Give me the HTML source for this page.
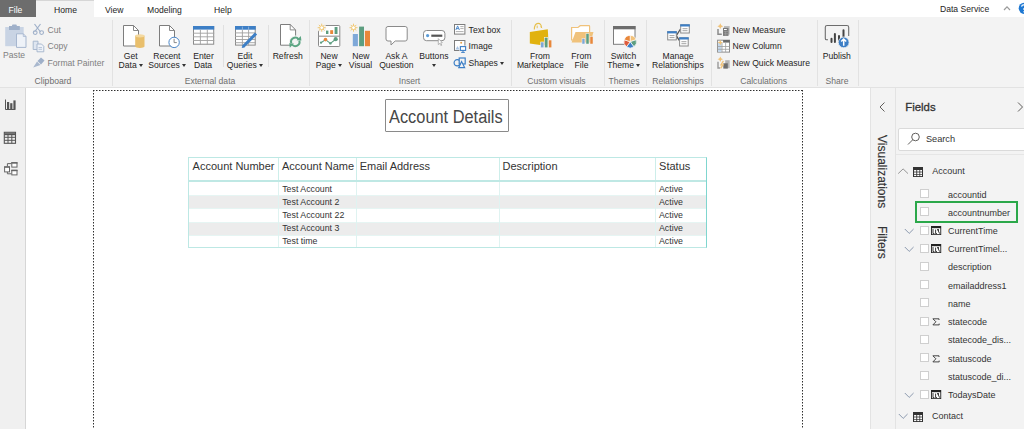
<!DOCTYPE html>
<html><head><meta charset="utf-8"><style>
html,body{margin:0;padding:0;width:1024px;height:429px;overflow:hidden;background:#fff;}
body{position:relative;font-family:"Liberation Sans",sans-serif;}
.t{position:absolute;white-space:nowrap;margin:0;padding:0;}
.dd{display:inline-block;width:0;height:0;border-left:2.5px solid transparent;border-right:2.5px solid transparent;border-top:3px solid #333;vertical-align:1px;margin-left:0px;}
</style></head><body>
<div class="t" style="left:0px;top:0px;width:1024px;height:17px;background:#ffffff;"></div>
<div class="t" style="left:0px;top:0px;width:36px;height:17px;background:#6d6d6d;"></div>
<div class="t" style="left:36px;top:0px;width:58px;height:17px;background:#f3f3f3;border-top:1px solid #d6d6d6;box-sizing:border-box"></div>
<div class="t" style="left:8.50px;top:5.62px;font-size:8.6px;line-height:8.6px;color:#ffffff;font-weight:normal;">File</div>
<div class="t" style="left:54.00px;top:5.62px;font-size:8.6px;line-height:8.6px;color:#252423;font-weight:normal;">Home</div>
<div class="t" style="left:105.00px;top:5.62px;font-size:8.6px;line-height:8.6px;color:#252423;font-weight:normal;">View</div>
<div class="t" style="left:147.00px;top:5.62px;font-size:8.6px;line-height:8.6px;color:#252423;font-weight:normal;">Modeling</div>
<div class="t" style="left:214.00px;top:5.62px;font-size:8.6px;line-height:8.6px;color:#252423;font-weight:normal;">Help</div>
<div class="t" style="left:940.00px;top:4.72px;font-size:8.6px;line-height:8.6px;color:#252423;font-weight:normal;">Data Service</div>
<svg class="t" style="left:1002px;top:4px" width="10" height="8" viewBox="0 0 10 8"><path d="M2 6 L5 2.9 L8 6" fill="none" stroke="#9a9a9a" stroke-width="1.2"/></svg>
<svg class="t" style="left:1016px;top:1px" width="8" height="15" viewBox="0 0 8 15"><circle cx="8.3" cy="7.3" r="5.6" fill="#1e78d2"/><path d="M5.6 5.6 Q5.8 3.8 7.6 3.8 Q9.6 3.8 9.5 5.6 Q9.4 6.8 8 7.6 V9" fill="none" stroke="#fff" stroke-width="1.2"/><circle cx="8" cy="10.8" r="0.7" fill="#fff"/></svg>
<div class="t" style="left:0px;top:17px;width:1024px;height:70px;background:#f3f3f3;"></div>
<div class="t" style="left:0px;top:87px;width:1024px;height:1px;background:#e2e2e2;"></div>
<div class="t" style="left:112px;top:20px;width:1px;height:66px;background:#e2e2e2;"></div>
<div class="t" style="left:309px;top:20px;width:1px;height:66px;background:#e2e2e2;"></div>
<div class="t" style="left:511px;top:20px;width:1px;height:66px;background:#e2e2e2;"></div>
<div class="t" style="left:604px;top:20px;width:1px;height:66px;background:#e2e2e2;"></div>
<div class="t" style="left:646px;top:20px;width:1px;height:66px;background:#e2e2e2;"></div>
<div class="t" style="left:711px;top:20px;width:1px;height:66px;background:#e2e2e2;"></div>
<div class="t" style="left:817px;top:20px;width:1px;height:66px;background:#e2e2e2;"></div>
<div class="t" style="left:858px;top:20px;width:1px;height:66px;background:#e2e2e2;"></div>
<div class="t" style="left:223px;top:25px;width:1px;height:42px;background:#e0e0e0;"></div>
<div class="t" style="left:268px;top:25px;width:1px;height:42px;background:#e0e0e0;"></div>
<div class="t" style="left:-5.90px;top:51.32px;width:40px;text-align:center;font-size:8.6px;line-height:8.6px;color:#808080;font-weight:normal;">Paste</div>
<div class="t" style="left:100.70px;top:51.72px;width:60px;text-align:center;font-size:8.6px;line-height:8.6px;color:#252423;font-weight:normal;">Get</div>
<div class="t" style="left:100.80px;top:61.42px;width:60px;text-align:center;font-size:8.6px;line-height:8.6px;color:#252423;font-weight:normal;">Data <span class="dd"></span></div>
<div class="t" style="left:136.90px;top:51.72px;width:60px;text-align:center;font-size:8.6px;line-height:8.6px;color:#252423;font-weight:normal;">Recent</div>
<div class="t" style="left:137.20px;top:61.42px;width:60px;text-align:center;font-size:8.6px;line-height:8.6px;color:#252423;font-weight:normal;">Sources <span class="dd"></span></div>
<div class="t" style="left:173.50px;top:51.72px;width:60px;text-align:center;font-size:8.6px;line-height:8.6px;color:#252423;font-weight:normal;">Enter</div>
<div class="t" style="left:173.00px;top:61.42px;width:60px;text-align:center;font-size:8.6px;line-height:8.6px;color:#252423;font-weight:normal;">Data</div>
<div class="t" style="left:214.90px;top:51.72px;width:60px;text-align:center;font-size:8.6px;line-height:8.6px;color:#252423;font-weight:normal;">Edit</div>
<div class="t" style="left:215.00px;top:61.42px;width:60px;text-align:center;font-size:8.6px;line-height:8.6px;color:#252423;font-weight:normal;">Queries <span class="dd"></span></div>
<div class="t" style="left:257.70px;top:51.72px;width:60px;text-align:center;font-size:8.6px;line-height:8.6px;color:#252423;font-weight:normal;">Refresh</div>
<div class="t" style="left:299.00px;top:51.72px;width:60px;text-align:center;font-size:8.6px;line-height:8.6px;color:#252423;font-weight:normal;">New</div>
<div class="t" style="left:299.00px;top:61.42px;width:60px;text-align:center;font-size:8.6px;line-height:8.6px;color:#252423;font-weight:normal;">Page <span class="dd"></span></div>
<div class="t" style="left:330.90px;top:51.72px;width:60px;text-align:center;font-size:8.6px;line-height:8.6px;color:#252423;font-weight:normal;">New</div>
<div class="t" style="left:330.50px;top:61.42px;width:60px;text-align:center;font-size:8.6px;line-height:8.6px;color:#252423;font-weight:normal;">Visual</div>
<div class="t" style="left:366.40px;top:51.72px;width:60px;text-align:center;font-size:8.6px;line-height:8.6px;color:#252423;font-weight:normal;">Ask A</div>
<div class="t" style="left:366.40px;top:61.42px;width:60px;text-align:center;font-size:8.6px;line-height:8.6px;color:#252423;font-weight:normal;">Question</div>
<div class="t" style="left:403.90px;top:51.72px;width:60px;text-align:center;font-size:8.6px;line-height:8.6px;color:#252423;font-weight:normal;">Buttons</div>
<div class="t" style="left:403.60px;top:61.42px;width:60px;text-align:center;font-size:8.6px;line-height:8.6px;color:#252423;font-weight:normal;"><span class="dd"></span></div>
<div class="t" style="left:505.00px;top:51.72px;width:70px;text-align:center;font-size:8.6px;line-height:8.6px;color:#252423;font-weight:normal;">From</div>
<div class="t" style="left:505.30px;top:61.42px;width:70px;text-align:center;font-size:8.6px;line-height:8.6px;color:#252423;font-weight:normal;">Marketplace</div>
<div class="t" style="left:551.40px;top:51.72px;width:60px;text-align:center;font-size:8.6px;line-height:8.6px;color:#252423;font-weight:normal;">From</div>
<div class="t" style="left:551.50px;top:61.42px;width:60px;text-align:center;font-size:8.6px;line-height:8.6px;color:#252423;font-weight:normal;">File</div>
<div class="t" style="left:593.50px;top:51.72px;width:60px;text-align:center;font-size:8.6px;line-height:8.6px;color:#252423;font-weight:normal;">Switch</div>
<div class="t" style="left:593.90px;top:61.42px;width:60px;text-align:center;font-size:8.6px;line-height:8.6px;color:#252423;font-weight:normal;">Theme <span class="dd"></span></div>
<div class="t" style="left:643.10px;top:51.72px;width:70px;text-align:center;font-size:8.6px;line-height:8.6px;color:#252423;font-weight:normal;">Manage</div>
<div class="t" style="left:642.90px;top:61.42px;width:70px;text-align:center;font-size:8.6px;line-height:8.6px;color:#252423;font-weight:normal;">Relationships</div>
<div class="t" style="left:806.80px;top:52.32px;width:60px;text-align:center;font-size:8.6px;line-height:8.6px;color:#252423;font-weight:normal;">Publish</div>
<div class="t" style="left:47.50px;top:25.72px;font-size:8.6px;line-height:8.6px;color:#808080;font-weight:normal;">Cut</div>
<div class="t" style="left:47.50px;top:42.22px;font-size:8.6px;line-height:8.6px;color:#808080;font-weight:normal;">Copy</div>
<div class="t" style="left:47.50px;top:58.72px;font-size:8.6px;line-height:8.6px;color:#808080;font-weight:normal;">Format Painter</div>
<div class="t" style="left:468.60px;top:25.72px;font-size:8.6px;line-height:8.6px;color:#252423;font-weight:normal;">Text box</div>
<div class="t" style="left:468.60px;top:42.12px;font-size:8.6px;line-height:8.6px;color:#252423;font-weight:normal;">Image</div>
<div class="t" style="left:468.60px;top:59.32px;font-size:8.6px;line-height:8.6px;color:#252423;font-weight:normal;">Shapes <span class="dd"></span></div>
<div class="t" style="left:732.60px;top:25.72px;font-size:8.6px;line-height:8.6px;color:#252423;font-weight:normal;">New Measure</div>
<div class="t" style="left:732.60px;top:42.12px;font-size:8.6px;line-height:8.6px;color:#252423;font-weight:normal;">New Column</div>
<div class="t" style="left:732.60px;top:59.32px;font-size:8.6px;line-height:8.6px;color:#252423;font-weight:normal;">New Quick Measure</div>
<div class="t" style="left:8.00px;top:77.22px;width:90px;text-align:center;font-size:8.6px;line-height:8.6px;color:#6e6e6e;font-weight:normal;">Clipboard</div>
<div class="t" style="left:165.00px;top:77.22px;width:90px;text-align:center;font-size:8.6px;line-height:8.6px;color:#6e6e6e;font-weight:normal;">External data</div>
<div class="t" style="left:364.50px;top:77.22px;width:90px;text-align:center;font-size:8.6px;line-height:8.6px;color:#6e6e6e;font-weight:normal;">Insert</div>
<div class="t" style="left:511.50px;top:77.22px;width:90px;text-align:center;font-size:8.6px;line-height:8.6px;color:#6e6e6e;font-weight:normal;">Custom visuals</div>
<div class="t" style="left:579.00px;top:77.22px;width:90px;text-align:center;font-size:8.6px;line-height:8.6px;color:#6e6e6e;font-weight:normal;">Themes</div>
<div class="t" style="left:633.00px;top:77.22px;width:90px;text-align:center;font-size:8.6px;line-height:8.6px;color:#6e6e6e;font-weight:normal;">Relationships</div>
<div class="t" style="left:718.60px;top:77.22px;width:90px;text-align:center;font-size:8.6px;line-height:8.6px;color:#6e6e6e;font-weight:normal;">Calculations</div>
<div class="t" style="left:792.00px;top:77.22px;width:90px;text-align:center;font-size:8.6px;line-height:8.6px;color:#6e6e6e;font-weight:normal;">Share</div>
<svg class="t" style="left:0px;top:20px" width="30" height="30" viewBox="0 0 30 30"><rect x="5.2" y="7" width="18.5" height="19.2" fill="#c9d4e4"/><rect x="9" y="6" width="10.8" height="4" fill="#9fb0c9"/><rect x="12" y="4.5" width="4.8" height="2.5" rx="1" fill="#9fb0c9"/><path d="M16.5 13.8 H23.3 L26 16.5 V27.4 H16.5 Z" fill="#eef2f8" stroke="#a7b7cf" stroke-width="1"/><path d="M23.3 13.8 V16.5 H26" fill="none" stroke="#a7b7cf" stroke-width="0.8"/></svg>
<svg class="t" style="left:32px;top:23px" width="13" height="13" viewBox="0 0 13 13"><path d="M2.5 1 L8.5 9 M8.5 1 L2.5 9" stroke="#9fb0c9" stroke-width="1.2" fill="none"/><circle cx="3.2" cy="9.6" r="1.9" fill="none" stroke="#9fb0c9" stroke-width="1.1"/><circle cx="9.6" cy="9.6" r="1.9" fill="none" stroke="#9fb0c9" stroke-width="1.1"/></svg>
<svg class="t" style="left:32px;top:40px" width="13" height="13" viewBox="0 0 13 13"><path d="M1.2 1.2 H6 V9.5 H1.2 Z" fill="#dfe6f0" stroke="#a3b3cb" stroke-width="0.9"/><path d="M5 4 H9.5 L11.8 6.3 V11.8 H5 Z" fill="#eef2f8" stroke="#a3b3cb" stroke-width="0.9"/><path d="M6.5 7.5 H10 M6.5 9.3 H10" stroke="#a3b3cb" stroke-width="0.7"/></svg>
<svg class="t" style="left:32px;top:56px" width="14" height="13" viewBox="0 0 14 13"><path d="M1.2 11.5 L5 5.5 L8.5 9 Z" fill="#a9b8ce"/><path d="M5.5 5 L9 1.5 L12.5 4.5 L9 8.5 Z" fill="#9fb0c9"/></svg>
<svg class="t" style="left:122.6px;top:24.6px" width="24" height="24" viewBox="0 0 24 24"><path d="M0.5 0.5 H10.5 L15.5 5.5 V21 H0.5 Z" fill="#ffffff" stroke="#7d7d7d" stroke-width="1"/><path d="M10.5 0.5 V5.5 H15.5" fill="none" stroke="#7d7d7d" stroke-width="0.9"/><path d="M12.2 10.8 V21.6 A4.7 1.6 0 0 0 21.5 21.6 V10.8 Z" fill="#e9bf6c"/><ellipse cx="16.85" cy="10.8" rx="4.7" ry="1.6" fill="#f4d9a0"/></svg>
<svg class="t" style="left:158.6px;top:24.6px" width="24" height="26" viewBox="0 0 24 26"><path d="M0.5 0.5 H10.5 L15.5 5.5 V21 H0.5 Z" fill="#ffffff" stroke="#7d7d7d" stroke-width="1"/><path d="M10.5 0.5 V5.5 H15.5" fill="none" stroke="#7d7d7d" stroke-width="0.9"/><circle cx="15.1" cy="17.4" r="5.2" fill="#ffffff" stroke="#4a86c8" stroke-width="1"/><path d="M15.1 13.8 V17.6 H17.8" fill="none" stroke="#7d7d7d" stroke-width="0.9"/></svg>
<svg class="t" style="left:193px;top:26px" width="22" height="19" viewBox="0 0 22 19"><rect x="0.5" y="0.5" width="20.2" height="17.7" fill="#ffffff" stroke="#8a8a8a" stroke-width="1"/><rect x="0" y="0" width="21.2" height="3.6" fill="#3d7fc6"/><path d="M7.4 3.6 V18.7" stroke="#a0a0a0" stroke-width="0.9"/><path d="M14.3 3.6 V18.7" stroke="#a0a0a0" stroke-width="0.9"/><path d="M0 7.2 H21.2" stroke="#a0a0a0" stroke-width="0.9"/><path d="M0 10.8 H21.2" stroke="#a0a0a0" stroke-width="0.9"/><path d="M0 14.5 H21.2" stroke="#a0a0a0" stroke-width="0.9"/></svg>
<svg class="t" style="left:235px;top:26px" width="24" height="23" viewBox="0 0 24 23"><rect x="0.5" y="0.5" width="19.7" height="18.6" fill="#ffffff" stroke="#8a8a8a" stroke-width="1"/><rect x="0" y="0" width="20.7" height="3.7" fill="#3d7fc6"/><path d="M7.4 3.7 V19.6" stroke="#a0a0a0" stroke-width="0.9"/><path d="M13.6 3.7 V19.6" stroke="#a0a0a0" stroke-width="0.9"/><path d="M0 6.9 H20.7" stroke="#a0a0a0" stroke-width="0.9"/><path d="M0 10.4 H20.7" stroke="#a0a0a0" stroke-width="0.9"/><path d="M0 13.5 H20.7" stroke="#a0a0a0" stroke-width="0.9"/><path d="M0 16.7 H20.7" stroke="#a0a0a0" stroke-width="0.9"/><path d="M7.4 0.6 V3.6 M13.6 0.6 V3.6" stroke="#9dbde0" stroke-width="0.8"/><path d="M7.8 21 L21 7.5" stroke="#3d7fc6" stroke-width="3" stroke-linecap="butt"/><path d="M7.2 21.6 L8.8 19.6 L9.3 20.1 Z" fill="#3d7fc6" stroke="#3d7fc6" stroke-width="1"/></svg>
<svg class="t" style="left:279.5px;top:24px" width="24" height="25" viewBox="0 0 24 25"><path d="M0.5 0.5 H10.2 L15.6 5.9 V21.2 H0.5 Z" fill="#ffffff" stroke="#7d7d7d" stroke-width="1"/><path d="M10.2 0.5 V5.9 H15.6" fill="none" stroke="#7d7d7d" stroke-width="0.9"/><circle cx="15.3" cy="17.9" r="6.4" fill="#f3f3f3"/><path d="M11.3 19.2 A4.2 4.2 0 0 1 18.6 15.3" fill="none" stroke="#5ba583" stroke-width="2"/><path d="M16.6 16.3 L21.4 16.6 L20.8 12 Z" fill="#5ba583"/><path d="M19.3 16.6 A4.2 4.2 0 0 1 12 20.5" fill="none" stroke="#5ba583" stroke-width="2"/><path d="M14 19.5 L9.2 19.2 L9.8 23.8 Z" fill="#5ba583"/></svg>
<svg class="t" style="left:316px;top:22px" width="26" height="26" viewBox="0 0 26 26"><rect x="2.5" y="3.5" width="21.3" height="21" rx="1" fill="#ffffff" stroke="#8a8a8a" stroke-width="1"/><path d="M2.5 14.2 H23.8" stroke="#9a9a9a" stroke-width="1.2"/><rect x="10" y="8.6" width="2.4" height="3.4" fill="#5d9e80"/><rect x="14.2" y="8.2" width="2.9" height="3.8" fill="#e8873a"/><rect x="18.6" y="5" width="2.9" height="7" fill="#5d9e80"/><path d="M5 20.7 L9.5 17.6 L14.4 21.4 L19.7 17.2" fill="none" stroke="#5d9e80" stroke-width="1.1"/><circle cx="9.5" cy="17.6" r="1.8" fill="#e8873a"/><circle cx="19.7" cy="17.2" r="2.1" fill="#5d9e80"/><circle cx="14.4" cy="21.4" r="1.2" fill="#5d9e80"/><circle cx="5" cy="20.7" r="1.1" fill="#5d9e80"/><circle cx="5.7" cy="5.7" r="4.6" fill="#f3f3f3"/><g stroke="#efc469" stroke-width="0.9"><path d="M7.30 5.70 L9.70 5.70"/><path d="M6.83 6.83 L8.53 8.53"/><path d="M5.70 7.30 L5.70 9.70"/><path d="M4.57 6.83 L2.87 8.53"/><path d="M4.10 5.70 L1.70 5.70"/><path d="M4.57 4.57 L2.87 2.87"/><path d="M5.70 4.10 L5.70 1.70"/><path d="M6.83 4.57 L8.53 2.87"/></g><circle cx="5.7" cy="5.7" r="1.9" fill="#ffffff" stroke="#efc469" stroke-width="0.9"/></svg>
<svg class="t" style="left:347px;top:21px" width="26" height="27" viewBox="0 0 26 27"><rect x="5.8" y="13" width="5.1" height="12.2" fill="#7ea8d8"/><rect x="12.1" y="5.6" width="4.9" height="19.6" fill="#5d9e80"/><rect x="17.9" y="9.8" width="5.1" height="15.4" fill="#e8873a"/><g stroke="#efc469" stroke-width="0.9"><path d="M8.10 6.70 L10.50 6.70"/><path d="M7.63 7.83 L9.33 9.53"/><path d="M6.50 8.30 L6.50 10.70"/><path d="M5.37 7.83 L3.67 9.53"/><path d="M4.90 6.70 L2.50 6.70"/><path d="M5.37 5.57 L3.67 3.87"/><path d="M6.50 5.10 L6.50 2.70"/><path d="M7.63 5.57 L9.33 3.87"/></g><circle cx="6.5" cy="6.7" r="1.9" fill="#ffffff" stroke="#efc469" stroke-width="0.9"/></svg>
<svg class="t" style="left:385px;top:25px" width="24" height="22" viewBox="0 0 24 22"><path d="M3 1.5 H20.2 Q22.2 1.5 22.2 3.5 V14 Q22.2 16 20.2 16 H10.2 L6 20 V16 H3 Q1 16 1 14 V3.5 Q1 1.5 3 1.5 Z" fill="#ffffff" stroke="#8a8a8a" stroke-width="1"/></svg>
<svg class="t" style="left:422px;top:29px" width="25" height="18" viewBox="0 0 25 18"><rect x="1.5" y="1.5" width="21.4" height="10.2" rx="3" fill="#ffffff" stroke="#8a8a8a" stroke-width="1"/><circle cx="5.6" cy="6.6" r="1.6" fill="#5a9bd8"/><rect x="9.3" y="5.6" width="11" height="2.2" fill="#555555"/><path d="M16.3 9.6 V15.6 L17.6 14.4 L18.9 16.6 L19.8 16.1 L18.6 13.9 L20.3 13.6 Z" fill="#ffffff" stroke="#9a9a9a" stroke-width="0.7"/></svg>
<svg class="t" style="left:454px;top:24px" width="12" height="11" viewBox="0 0 12 11"><rect x="0.5" y="0.5" width="10.4" height="9.6" fill="#ffffff" stroke="#7d7d7d" stroke-width="1"/><path d="M1.8 6 L3.6 1.9 L5.4 6 M2.5 4.6 H4.7" fill="none" stroke="#3d7fc6" stroke-width="0.9"/><path d="M6.3 2.6 H9.6 M6.3 4.6 H9.6 M1.8 7.6 H9.6" stroke="#9a9a9a" stroke-width="0.8"/></svg>
<svg class="t" style="left:454px;top:40px" width="13" height="14" viewBox="0 0 13 14"><rect x="0.5" y="0.5" width="10.4" height="10" fill="#ffffff" stroke="#7d7d7d" stroke-width="1"/><circle cx="7.2" cy="2.8" r="1" fill="#e8a24a"/><path d="M1.5 9.5 L3.5 6 L5.5 9.5 Z" fill="#a9c4e4"/><rect x="5.4" y="5.6" width="7" height="5.6" fill="#f3f3f3"/><rect x="6.4" y="6.6" width="5.2" height="3.8" fill="#ffffff" stroke="#3d7fc6" stroke-width="1.1"/><path d="M9 10.6 V12 M7.2 12.4 H10.8" stroke="#3d7fc6" stroke-width="1"/></svg>
<svg class="t" style="left:453px;top:57px" width="14" height="12" viewBox="0 0 14 12"><circle cx="4.2" cy="5.8" r="3.1" fill="none" stroke="#3d7fc6" stroke-width="1.2"/><rect x="6.2" y="1" width="6" height="6" fill="#f3f3f3" stroke="#3d7fc6" stroke-width="1.2"/><path d="M8.6 4.6 L5.8 10.6 H11.6 Z" fill="#f3f3f3" stroke="#3d7fc6" stroke-width="1.2"/></svg>
<svg class="t" style="left:528px;top:21px" width="26" height="28" viewBox="0 0 26 28"><path d="M6.3 8.6 Q6.5 2.5 10 2.4 Q13.5 2.3 13.4 7" fill="none" stroke="#e6bf4a" stroke-width="1.1"/><path d="M9.2 7.2 V4.6 M12.6 5.6 L14.2 6.9" stroke="#e6bf4a" stroke-width="0.9"/><path d="M1.8 11 L19.8 8.2 L20.6 23.2 L15.4 24.4 L1.8 22.5 Z" fill="#e1b20f"/><rect x="12.7" y="21" width="3.2" height="5.8" fill="#7ea8d8" stroke="#f3f3f3" stroke-width="0.6"/><rect x="16.6" y="16.4" width="3.3" height="10.4" fill="#5d9e80" stroke="#f3f3f3" stroke-width="0.6"/><rect x="20.6" y="19" width="3.2" height="7.8" fill="#e8873a" stroke="#f3f3f3" stroke-width="0.6"/></svg>
<svg class="t" style="left:570px;top:24px" width="26" height="22" viewBox="0 0 26 22"><path d="M1.6 3.5 H8 L10.2 1.7 H19 Q19.6 1.7 19.6 2.4 V16 H1.6 Z" fill="#ffffff" stroke="#f0c27b" stroke-width="1.2"/><path d="M1.6 18.4 L5.5 8 H23.5 L20.5 18.4 Z" fill="#f0c27b"/><rect x="12" y="14.6" width="2.9" height="5.4" fill="#7ea8d8" stroke="#f3f3f3" stroke-width="0.5"/><rect x="16" y="9.6" width="3" height="10.4" fill="#5d9e80" stroke="#f3f3f3" stroke-width="0.5"/><rect x="20" y="12.4" width="3" height="7.6" fill="#e8873a" stroke="#f3f3f3" stroke-width="0.5"/></svg>
<svg class="t" style="left:612px;top:25px" width="27" height="25" viewBox="0 0 27 25"><rect x="1.5" y="1.5" width="21.5" height="17.8" fill="#ffffff" stroke="#7d7d7d" stroke-width="1"/><rect x="1" y="1" width="22.5" height="3.3" fill="#6d6d6d"/><path d="M18.2 16.7 L18.20 10.40 A6.3 6.3 0 0 1 24.19 14.75 Z" fill="#f2c27a" stroke="#ffffff" stroke-width="0.7"/><path d="M18.2 16.7 L24.19 14.75 A6.3 6.3 0 0 1 21.90 21.80 Z" fill="#5d9e80" stroke="#ffffff" stroke-width="0.7"/><path d="M18.2 16.7 L21.90 21.80 A6.3 6.3 0 0 1 14.50 21.80 Z" fill="#3d7fc6" stroke="#ffffff" stroke-width="0.7"/><path d="M18.2 16.7 L14.50 21.80 A6.3 6.3 0 0 1 12.21 14.75 Z" fill="#de5b3c" stroke="#ffffff" stroke-width="0.7"/><path d="M18.2 16.7 L12.21 14.75 A6.3 6.3 0 0 1 18.20 10.40 Z" fill="#e8873a" stroke="#ffffff" stroke-width="0.7"/></svg>
<svg class="t" style="left:666px;top:23px" width="26" height="25" viewBox="0 0 26 25"><path d="M10.3 12.6 L14.5 6 M10.3 12.6 L13.2 17.4" stroke="#555" stroke-width="1.3" fill="none"/><rect x="1.7" y="8.7" width="8.6" height="8.2" fill="#ffffff" stroke="#8a8a8a" stroke-width="1"/><rect x="1.2" y="8.2" width="9.6" height="2.2" fill="#3d7fc6"/><path d="M3.5 12.6 H8.5 M3.5 14.6 H8.5" stroke="#8a8a8a" stroke-width="0.8"/><rect x="14.7" y="1.8" width="8.6" height="8.2" fill="#ffffff" stroke="#8a8a8a" stroke-width="1"/><rect x="14.2" y="1.3" width="9.6" height="2.2" fill="#3d7fc6"/><path d="M16.5 5.7 H21.5 M16.5 7.7 H21.5" stroke="#8a8a8a" stroke-width="0.8"/><rect x="13.6" y="14.8" width="8.6" height="8.2" fill="#ffffff" stroke="#8a8a8a" stroke-width="1"/><rect x="13.1" y="14.3" width="9.6" height="2.2" fill="#3d7fc6"/><path d="M15.399999999999999 18.700000000000003 H20.4 M15.399999999999999 20.700000000000003 H20.4" stroke="#8a8a8a" stroke-width="0.8"/></svg>
<svg class="t" style="left:714px;top:21px" width="18" height="16" viewBox="0 0 18 16"><path d="M4 8 V13.2 H7.8" fill="none" stroke="#8c8c8c" stroke-width="1.5"/><rect x="10" y="5" width="5.7" height="8.6" fill="#bdbdbd"/><rect x="9" y="6.9" width="5.5" height="8" fill="#7a7a7a"/><rect x="10" y="8" width="2.8" height="1" fill="#ffffff"/><path d="M9.8 10.6 H14 M9.8 12.8 H14 M11.7 10 V14.6" stroke="#a8a8a8" stroke-width="0.6"/><path d="M6.3 2.3000000000000003 Q6.6712 4.8288 9.2 5.2 Q6.6712 5.5712 6.3 8.1 Q5.9288 5.5712 3.4 5.2 Q5.9288 4.8288 6.3 2.3000000000000003 Z" fill="#f0c278"/></svg>
<svg class="t" style="left:714px;top:37px" width="18" height="16" viewBox="0 0 18 16"><rect x="3.6" y="3.2" width="11.9" height="11.9" fill="#ffffff" stroke="#8c8c8c" stroke-width="1"/><rect x="9.1" y="3" width="6.6" height="2.6" fill="#6a6a6a"/><rect x="4.1" y="6" width="3.4" height="8.8" fill="#c2d8ee"/><path d="M8 5.6 V15 M11.6 5.6 V15 M3.6 9.5 H15.5 M3.6 12.3 H15.5" stroke="#a0a0a0" stroke-width="0.8"/><path d="M6.3 2.8999999999999995 Q6.6456 5.2543999999999995 9.0 5.6 Q6.6456 5.9456 6.3 8.3 Q5.9544 5.9456 3.5999999999999996 5.6 Q5.9544 5.2543999999999995 6.3 2.8999999999999995 Z" fill="#f0c278"/></svg>
<svg class="t" style="left:714px;top:54px" width="18" height="16" viewBox="0 0 18 16"><path d="M4 7.8 V14 H6" fill="none" stroke="#9a9a9a" stroke-width="1.4"/><rect x="11.2" y="6.2" width="4.5" height="8" fill="#b5b5b5"/><rect x="9.3" y="9.3" width="4.5" height="5.3" fill="#6e6e6e"/><path d="M9.4 6.8 L7 10.8 H9 L6.6 14.4" fill="none" stroke="#f0c278" stroke-width="1.3"/><path d="M6.3 2.5 Q6.6456 4.8544 9.0 5.2 Q6.6456 5.5456 6.3 7.9 Q5.9544 5.5456 3.5999999999999996 5.2 Q5.9544 4.8544 6.3 2.5 Z" fill="#f0c278"/></svg>
<svg class="t" style="left:824px;top:24px" width="28" height="25" viewBox="0 0 28 25"><path d="M4 15.8 L2.6 15.8 Q1.3 15.8 1.3 14.5 V3.3 Q1.3 1.5 3.1 1.5 H22.9 Q24.7 1.5 24.7 3.3 V12" fill="none" stroke="#6d6d6d" stroke-width="1.1"/><path d="M7.5 14.8 V18 M10.9 9.9 V18 M15 11.9 V18 M19.5 6.2 V14" stroke="#444" stroke-width="2" stroke-linecap="round"/><circle cx="19.7" cy="18.4" r="5.4" fill="#3d7fc6" stroke="#f3f3f3" stroke-width="0.8"/><path d="M19.7 21.8 V15.2 M17.2 17.6 L19.7 15 L22.2 17.6" fill="none" stroke="#ffffff" stroke-width="1.5"/></svg>
<div class="t" style="left:0px;top:88px;width:25px;height:341px;background:#f0f0f0;"></div>
<div class="t" style="left:25px;top:88px;width:1px;height:341px;background:#d6d6d6;"></div>
<div class="t" style="left:26px;top:88px;width:844px;height:341px;background:#ffffff;"></div>
<div class="t" style="left:93px;top:90px;width:710px;height:1px;background:repeating-linear-gradient(90deg,#2e2e2e 0 1px,#9a9a9a 1px 2px,transparent 2px 3px);"></div>
<div class="t" style="left:93px;top:90px;width:1px;height:339px;background:repeating-linear-gradient(180deg,#2e2e2e 0 1px,#9a9a9a 1px 2px,transparent 2px 3px);"></div>
<div class="t" style="left:802px;top:90px;width:1px;height:339px;background:repeating-linear-gradient(180deg,#2e2e2e 0 1px,#9a9a9a 1px 2px,transparent 2px 3px);"></div>
<div class="t" style="left:385px;top:99px;width:124px;height:33px;background:#ffffff;border:1px solid #8a8a8a;box-sizing:border-box;border-radius:1px"></div>
<div class="t" style="left:389.30px;top:108.60px;font-size:17.6px;line-height:17.6px;color:#474747;font-weight:normal;transform-origin:0 0;transform:scaleX(0.93)">Account Details</div>
<div class="t" style="left:188px;top:157px;width:519px;height:91px;background:#ffffff;border:1px solid #bde8e4;border-right-color:#7fd6cf;box-sizing:border-box"></div>
<div class="t" style="left:189px;top:182px;width:517px;height:13px;background:#ffffff;"></div>
<div class="t" style="left:189px;top:195px;width:517px;height:13px;background:#ececec;"></div>
<div class="t" style="left:189px;top:208px;width:517px;height:14px;background:#ffffff;"></div>
<div class="t" style="left:189px;top:222px;width:517px;height:13px;background:#ececec;"></div>
<div class="t" style="left:189px;top:235px;width:517px;height:12px;background:#ffffff;"></div>
<div class="t" style="left:189px;top:195px;width:517px;height:1px;background:#e6f5f3;"></div>
<div class="t" style="left:189px;top:208px;width:517px;height:1px;background:#e6f5f3;"></div>
<div class="t" style="left:189px;top:222px;width:517px;height:1px;background:#e6f5f3;"></div>
<div class="t" style="left:189px;top:235px;width:517px;height:1px;background:#e6f5f3;"></div>
<div class="t" style="left:189px;top:180px;width:517px;height:2px;background:#bfe8e4;"></div>
<div class="t" style="left:278px;top:158px;width:1px;height:22px;background:#cdeeea;"></div>
<div class="t" style="left:278px;top:182px;width:1px;height:65px;background:#dff3f1;"></div>
<div class="t" style="left:356px;top:158px;width:1px;height:22px;background:#cdeeea;"></div>
<div class="t" style="left:356px;top:182px;width:1px;height:65px;background:#dff3f1;"></div>
<div class="t" style="left:499px;top:158px;width:1px;height:22px;background:#cdeeea;"></div>
<div class="t" style="left:499px;top:182px;width:1px;height:65px;background:#dff3f1;"></div>
<div class="t" style="left:655px;top:158px;width:1px;height:22px;background:#cdeeea;"></div>
<div class="t" style="left:655px;top:182px;width:1px;height:65px;background:#dff3f1;"></div>
<div class="t" style="left:192.60px;top:161.19px;font-size:11.0px;line-height:11.0px;color:#333333;font-weight:normal;">Account Number</div>
<div class="t" style="left:282.00px;top:161.19px;font-size:11.0px;line-height:11.0px;color:#333333;font-weight:normal;">Account Name</div>
<div class="t" style="left:359.70px;top:161.19px;font-size:11.0px;line-height:11.0px;color:#333333;font-weight:normal;">Email Address</div>
<div class="t" style="left:502.50px;top:161.19px;font-size:11.0px;line-height:11.0px;color:#333333;font-weight:normal;">Description</div>
<div class="t" style="left:659.10px;top:161.19px;font-size:11.0px;line-height:11.0px;color:#333333;font-weight:normal;">Status</div>
<div class="t" style="left:282.20px;top:184.55px;font-size:8.8px;line-height:8.8px;color:#333333;font-weight:normal;">Test Account</div>
<div class="t" style="left:659.00px;top:184.55px;font-size:8.8px;line-height:8.8px;color:#333333;font-weight:normal;">Active</div>
<div class="t" style="left:282.20px;top:197.65px;font-size:8.8px;line-height:8.8px;color:#333333;font-weight:normal;">Test Account 2</div>
<div class="t" style="left:659.00px;top:197.65px;font-size:8.8px;line-height:8.8px;color:#333333;font-weight:normal;">Active</div>
<div class="t" style="left:282.20px;top:210.85px;font-size:8.8px;line-height:8.8px;color:#333333;font-weight:normal;">Test Account 22</div>
<div class="t" style="left:659.00px;top:210.85px;font-size:8.8px;line-height:8.8px;color:#333333;font-weight:normal;">Active</div>
<div class="t" style="left:282.20px;top:224.15px;font-size:8.8px;line-height:8.8px;color:#333333;font-weight:normal;">Test Account 3</div>
<div class="t" style="left:659.00px;top:224.15px;font-size:8.8px;line-height:8.8px;color:#333333;font-weight:normal;">Active</div>
<div class="t" style="left:282.20px;top:237.45px;font-size:8.8px;line-height:8.8px;color:#333333;font-weight:normal;">Test time</div>
<div class="t" style="left:659.00px;top:237.45px;font-size:8.8px;line-height:8.8px;color:#333333;font-weight:normal;">Active</div>
<div class="t" style="left:870px;top:88px;width:1px;height:341px;background:#e3e3e3;"></div>
<div class="t" style="left:871px;top:88px;width:24px;height:341px;background:#f3f3f3;"></div>
<div class="t" style="left:895px;top:88px;width:1px;height:341px;background:#e3e3e3;"></div>
<svg class="t" style="left:878px;top:101px" width="9" height="12" viewBox="0 0 9 12"><path d="M6.5 1.5 L2 6 L6.5 10.5" fill="none" stroke="#605e5c" stroke-width="1"/></svg>
<div class="t" style="left:887.86px;top:135px;font-size:12.0px;line-height:12.0px;color:#333;-webkit-text-stroke:0.15px #333;transform-origin:0 0;transform:rotate(90deg)">Visualizations</div>
<div class="t" style="left:887.86px;top:226px;font-size:12.0px;line-height:12.0px;color:#333;-webkit-text-stroke:0.15px #333;transform-origin:0 0;transform:rotate(90deg)">Filters</div>
<div class="t" style="left:896px;top:88px;width:128px;height:341px;background:#f3f3f3;"></div>
<div class="t" style="left:905.20px;top:101.55px;font-size:11.4px;line-height:11.4px;color:#333333;font-weight:normal;-webkit-text-stroke:0.3px #333">Fields</div>
<div class="t" style="left:896px;top:154px;width:128px;height:1px;background:#e6e6e6;"></div>
<svg class="t" style="left:1016px;top:101px" width="8" height="12" viewBox="0 0 8 12"><path d="M2 1.5 L6.5 6 L2 10.5" fill="none" stroke="#605e5c" stroke-width="1"/></svg>
<div class="t" style="left:898px;top:128px;width:130px;height:23px;background:#ffffff;border:1px solid #dadada;box-sizing:border-box;border-radius:2px"></div>
<svg class="t" style="left:906px;top:132px" width="16" height="14" viewBox="0 0 16 14"><circle cx="9.5" cy="5" r="3.8" fill="none" stroke="#605e5c" stroke-width="1"/><path d="M6.8 7.7 L2 12.5" stroke="#605e5c" stroke-width="1"/></svg>
<div class="t" style="left:925.90px;top:135.21px;font-size:9.2px;line-height:9.2px;color:#333333;font-weight:normal;">Search</div>
<div class="t" style="left:932.20px;top:167.18px;font-size:9.0px;line-height:9.0px;color:#333333;font-weight:normal;">Account</div>
<svg class="t" style="left:897px;top:167px" width="12" height="8" viewBox="0 0 12 8"><path d="M1.2 6.6 L6.1 1.9 L11 6.6" fill="none" stroke="#8a8a8a" stroke-width="0.9"/></svg>
<svg class="t" style="left:913px;top:167px" width="11" height="11" viewBox="0 0 11 11"><rect x="0" y="0" width="10" height="10" fill="#333"/><rect x="1.1" y="3" width="2.2" height="1.6" fill="#fff"/><rect x="4.2" y="3" width="2.2" height="1.6" fill="#fff"/><rect x="7.2" y="3" width="1.8" height="1.6" fill="#fff"/><rect x="1.1" y="5.4" width="2.2" height="1.6" fill="#fff"/><rect x="4.2" y="5.4" width="2.2" height="1.6" fill="#fff"/><rect x="7.2" y="5.4" width="1.8" height="1.6" fill="#fff"/><rect x="1.1" y="7.7" width="2.2" height="1.4" fill="#fff"/><rect x="4.2" y="7.7" width="2.2" height="1.4" fill="#fff"/><rect x="7.2" y="7.7" width="1.8" height="1.4" fill="#fff"/></svg>
<svg class="t" style="left:898px;top:413px" width="11" height="7" viewBox="0 0 11 7"><path d="M0.8 1 L5.2 5.4 L9.6 1" fill="none" stroke="#7f8fa6" stroke-width="0.9"/></svg>
<svg class="t" style="left:913px;top:411.5px" width="11" height="11" viewBox="0 0 11 11"><rect x="0" y="0" width="10" height="10" fill="#333"/><rect x="1.1" y="3" width="2.2" height="1.6" fill="#fff"/><rect x="4.2" y="3" width="2.2" height="1.6" fill="#fff"/><rect x="7.2" y="3" width="1.8" height="1.6" fill="#fff"/><rect x="1.1" y="5.4" width="2.2" height="1.6" fill="#fff"/><rect x="4.2" y="5.4" width="2.2" height="1.6" fill="#fff"/><rect x="7.2" y="5.4" width="1.8" height="1.6" fill="#fff"/><rect x="1.1" y="7.7" width="2.2" height="1.4" fill="#fff"/><rect x="4.2" y="7.7" width="2.2" height="1.4" fill="#fff"/><rect x="7.2" y="7.7" width="1.8" height="1.4" fill="#fff"/></svg>
<div class="t" style="left:948.00px;top:190.78px;font-size:9.0px;line-height:9.0px;color:#333333;font-weight:normal;">accountid</div>
<div class="t" style="left:920px;top:189px;width:9px;height:9px;background:#ffffff;border:1px solid #cfcfcf;box-sizing:border-box"></div>
<div class="t" style="left:948.00px;top:208.78px;font-size:9.0px;line-height:9.0px;color:#333333;font-weight:normal;">accountnumber</div>
<div class="t" style="left:920px;top:207px;width:9px;height:9px;background:#ffffff;border:1px solid #cfcfcf;box-sizing:border-box"></div>
<div class="t" style="left:948.00px;top:227.08px;font-size:9.0px;line-height:9.0px;color:#333333;font-weight:normal;">CurrentTime</div>
<div class="t" style="left:920px;top:226px;width:9px;height:9px;background:#ffffff;border:1px solid #cfcfcf;box-sizing:border-box"></div>
<svg class="t" style="left:931px;top:226px" width="11" height="10" viewBox="0 0 11 10"><rect x="0" y="0" width="10.2" height="9" fill="#222"/><rect x="0.9" y="2.2" width="8.4" height="6" fill="#fff"/><path d="M2 3 V7.6 H3.4 M4.6 3.6 V7.6 H6 M6.4 3 L8.6 7.6 M7.4 3 V5" stroke="#222" stroke-width="0.9" fill="none"/></svg>
<svg class="t" style="left:904px;top:228px" width="11" height="7" viewBox="0 0 11 7"><path d="M0.8 1 L5.2 5.4 L9.6 1" fill="none" stroke="#7f8fa6" stroke-width="0.9"/></svg>
<div class="t" style="left:948.00px;top:245.28px;font-size:9.0px;line-height:9.0px;color:#333333;font-weight:normal;">CurrentTimel...</div>
<div class="t" style="left:920px;top:244px;width:9px;height:9px;background:#ffffff;border:1px solid #cfcfcf;box-sizing:border-box"></div>
<svg class="t" style="left:931px;top:244px" width="11" height="10" viewBox="0 0 11 10"><rect x="0" y="0" width="10.2" height="9" fill="#222"/><rect x="0.9" y="2.2" width="8.4" height="6" fill="#fff"/><path d="M2 3 V7.6 H3.4 M4.6 3.6 V7.6 H6 M6.4 3 L8.6 7.6 M7.4 3 V5" stroke="#222" stroke-width="0.9" fill="none"/></svg>
<svg class="t" style="left:904px;top:246px" width="11" height="7" viewBox="0 0 11 7"><path d="M0.8 1 L5.2 5.4 L9.6 1" fill="none" stroke="#7f8fa6" stroke-width="0.9"/></svg>
<div class="t" style="left:948.00px;top:263.48px;font-size:9.0px;line-height:9.0px;color:#333333;font-weight:normal;">description</div>
<div class="t" style="left:920px;top:262px;width:9px;height:9px;background:#ffffff;border:1px solid #cfcfcf;box-sizing:border-box"></div>
<div class="t" style="left:948.00px;top:281.68px;font-size:9.0px;line-height:9.0px;color:#333333;font-weight:normal;">emailaddress1</div>
<div class="t" style="left:920px;top:280px;width:9px;height:9px;background:#ffffff;border:1px solid #cfcfcf;box-sizing:border-box"></div>
<div class="t" style="left:948.00px;top:299.98px;font-size:9.0px;line-height:9.0px;color:#333333;font-weight:normal;">name</div>
<div class="t" style="left:920px;top:298px;width:9px;height:9px;background:#ffffff;border:1px solid #cfcfcf;box-sizing:border-box"></div>
<div class="t" style="left:948.00px;top:318.18px;font-size:9.0px;line-height:9.0px;color:#333333;font-weight:normal;">statecode</div>
<div class="t" style="left:920px;top:317px;width:9px;height:9px;background:#ffffff;border:1px solid #cfcfcf;box-sizing:border-box"></div>
<svg class="t" style="left:932px;top:318px" width="8" height="8" viewBox="0 0 8 8"><path d="M7 2 V0.8 H0.9 L3.9 3.8 L0.9 6.9 H7.2 V5.6" fill="none" stroke="#333" stroke-width="0.9"/></svg>
<div class="t" style="left:948.00px;top:336.48px;font-size:9.0px;line-height:9.0px;color:#333333;font-weight:normal;">statecode_dis...</div>
<div class="t" style="left:920px;top:335px;width:9px;height:9px;background:#ffffff;border:1px solid #cfcfcf;box-sizing:border-box"></div>
<div class="t" style="left:948.00px;top:354.68px;font-size:9.0px;line-height:9.0px;color:#333333;font-weight:normal;">statuscode</div>
<div class="t" style="left:920px;top:353px;width:9px;height:9px;background:#ffffff;border:1px solid #cfcfcf;box-sizing:border-box"></div>
<svg class="t" style="left:932px;top:355px" width="8" height="8" viewBox="0 0 8 8"><path d="M7 2 V0.8 H0.9 L3.9 3.8 L0.9 6.9 H7.2 V5.6" fill="none" stroke="#333" stroke-width="0.9"/></svg>
<div class="t" style="left:948.00px;top:372.88px;font-size:9.0px;line-height:9.0px;color:#333333;font-weight:normal;">statuscode_di...</div>
<div class="t" style="left:920px;top:371px;width:9px;height:9px;background:#ffffff;border:1px solid #cfcfcf;box-sizing:border-box"></div>
<div class="t" style="left:948.00px;top:391.08px;font-size:9.0px;line-height:9.0px;color:#333333;font-weight:normal;">TodaysDate</div>
<div class="t" style="left:920px;top:390px;width:9px;height:9px;background:#ffffff;border:1px solid #cfcfcf;box-sizing:border-box"></div>
<svg class="t" style="left:931px;top:390px" width="11" height="10" viewBox="0 0 11 10"><rect x="0" y="0" width="10.2" height="9" fill="#222"/><rect x="0.9" y="2.2" width="8.4" height="6" fill="#fff"/><path d="M2 3 V7.6 H3.4 M4.6 3.6 V7.6 H6 M6.4 3 L8.6 7.6 M7.4 3 V5" stroke="#222" stroke-width="0.9" fill="none"/></svg>
<svg class="t" style="left:904px;top:392px" width="11" height="7" viewBox="0 0 11 7"><path d="M0.8 1 L5.2 5.4 L9.6 1" fill="none" stroke="#7f8fa6" stroke-width="0.9"/></svg>
<div class="t" style="left:932.00px;top:411.88px;font-size:9.0px;line-height:9.0px;color:#333333;font-weight:normal;">Contact</div>
<div class="t" style="left:915px;top:201px;width:103px;height:22px;background:transparent;border:2px solid #2ba84a;box-sizing:border-box"></div>
<svg class="t" style="left:4px;top:98px" width="14" height="14" viewBox="0 0 14 14"><path d="M1.5 1.5 V11.5 H11.5" fill="none" stroke="#555" stroke-width="1"/><rect x="3" y="4" width="2.2" height="7" fill="#555"/><rect x="6.2" y="5.2" width="2.2" height="5.8" fill="#555"/><rect x="9.4" y="2.4" width="2.2" height="8.6" fill="#555"/></svg>
<svg class="t" style="left:3px;top:131px" width="14" height="14" viewBox="0 0 14 14"><rect x="1.3" y="1.3" width="11.2" height="11" fill="none" stroke="#555" stroke-width="1.1"/><path d="M1.3 3.2 H12.5" stroke="#555" stroke-width="2"/><path d="M1.3 6.3 H12.5 M1.3 9.3 H12.5 M5 3 V12.3 M8.8 3 V12.3" stroke="#555" stroke-width="1"/></svg>
<svg class="t" style="left:0px;top:155px" width="20" height="24" viewBox="0 0 20 24"><path d="M7.4 11.4 V8.6 H11.5 M7.4 16.8 V18.8 H11.5" fill="none" stroke="#666" stroke-width="1"/><rect x="4.6" y="11.9" width="4.9" height="5" fill="#fff" stroke="#666" stroke-width="1"/><rect x="4.1" y="11.4" width="5.9" height="1.3" fill="#666"/><rect x="11.8" y="7.7" width="5.2" height="4.4" fill="#fff" stroke="#666" stroke-width="1"/><rect x="11.3" y="7.2" width="6.2" height="1.4" fill="#666"/><rect x="11.8" y="15.3" width="5.2" height="4.6" fill="#fff" stroke="#666" stroke-width="1"/><rect x="11.3" y="14.8" width="6.2" height="1.4" fill="#666"/></svg>
</body></html>
